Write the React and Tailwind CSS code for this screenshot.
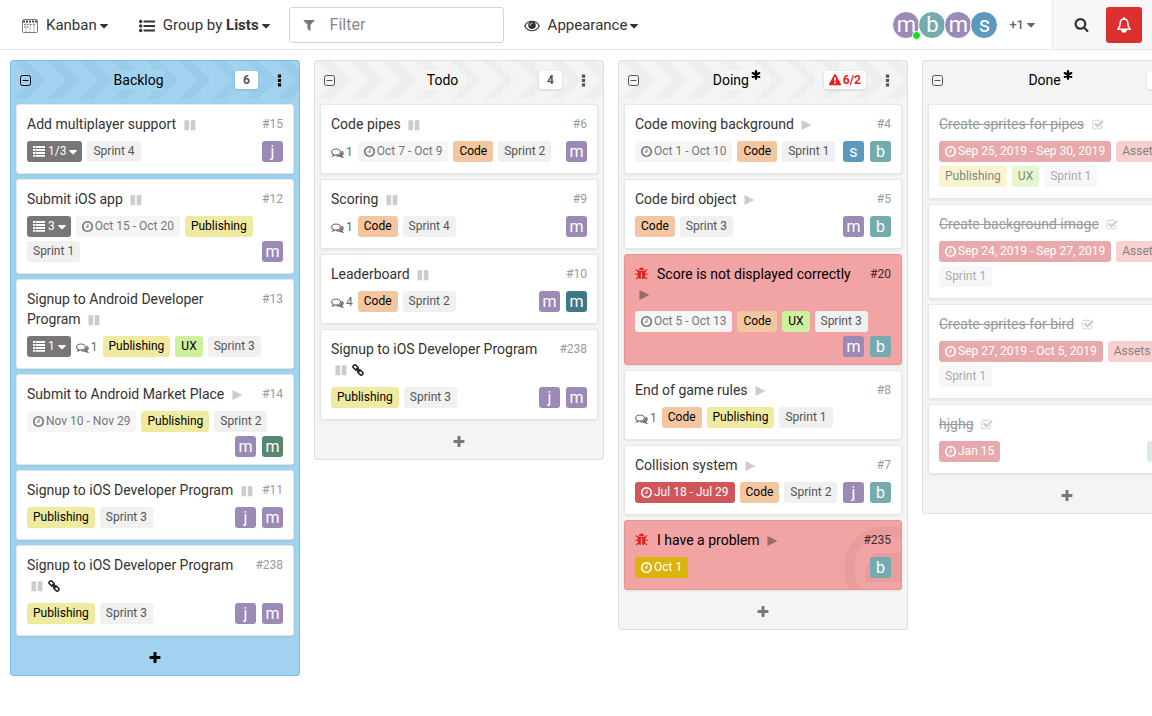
import React, { useState } from 'react';

const ICONS = {
    caret: 'M1408 704q0 26-19 45l-448 448q-19 19-45 19t-45-19l-448-448q-19-19-19-45t19-45 45-19h896q26 0 45 19t19 45z',
    plus: 'M1600 736v192q0 40-28 68t-68 28h-416v416q0 40-28 68t-68 28h-192q-40 0-68-28t-28-68v-416h-416q-40 0-68-28t-28-68v-192q0-40 28-68t68-28h416v-416q0-40 28-68t68-28h192q40 0 68 28t28 68v416h416q40 0 68 28t28 68z',
    clock: 'M1024 544v448q0 14-9 23t-23 9h-320q-14 0-23-9t-9-23v-64q0-14 9-23t23-9h224v-352q0-14 9-23t23-9h64q14 0 23 9t9 23zm416 352q0-148-73-273t-198-198-273-73-273 73-198 198-73 273 73 273 198 198 273 73 273-73 198-198 73-273zm224 0q0 209-103 385.5t-279.5 279.5-385.5 103-385.5-103-279.5-279.5-103-385.5 103-385.5 279.5-279.5 385.5-103 385.5 103 279.5 279.5 103 385.5z',
    search: 'M1216 832q0-185-131.5-316.5t-316.5-131.5-316.5 131.5-131.5 316.5 131.5 316.5 316.5 131.5 316.5-131.5 131.5-316.5zm512 832q0 52-38 90t-90 38q-54 0-90-38l-343-342q-179 124-399 124-143 0-273.5-55.5t-225-150-150-225-55.5-273.5 55.5-273.5 150-225 225-150 273.5-55.5 273.5 55.5 225 150 150 225 55.5 273.5q0 220-124 399l343 343q37 37 37 90z',
    filter: 'M1595 295q17 41-14 70l-493 493v742q0 42-39 59-13 5-25 5-27 0-45-19l-256-256q-19-19-19-45v-486l-493-493q-31-29-14-70 17-39 59-39h1280q42 0 59 39z',
    check: 'M1472 930v318q0 119-84.5 203.5t-203.5 84.5h-832q-119 0-203.5-84.5t-84.5-203.5v-832q0-119 84.5-203.5t203.5-84.5h832q63 0 117 25 15 7 18 23 3 17-9 29l-49 49q-10 10-23 10-3 0-9-2-23-6-45-6h-832q-66 0-113 47t-47 113v832q0 66 47 113t113 47h832q66 0 113-47t47-113v-254q0-13 9-22l64-64q10-10 23-10 6 0 12 3 20 8 20 29zm231-489l-814 814q-24 24-57 24t-57-24l-430-430q-24-24-24-57t24-57l110-110q24-24 57-24t57 24l263 263 647-647q24-24 57-24t57 24l110 110q24 24 24 57t-24 57z',
    warning: 'M1024 1375v-190q0-14-9.5-23.5t-22.5-9.5h-192q-13 0-22.5 9.5t-9.5 23.5v190q0 14 9.5 23.5t22.5 9.5h192q13 0 22.5-9.5t9.5-23.5zm-2-374l18-459q0-12-10-19-13-11-24-11h-220q-11 0-24 11-10 7-10 21l17 457q0 10 10 16.5t24 6.5h185q14 0 23.5-6.5t10.5-16.5zm-14-934l768 1408q35 63-2 126-17 29-46.5 46t-63.5 17h-1536q-34 0-63.5-17t-46.5-46q-37-63-2-126l768-1408q17-31 47-49t65-18 65 18 47 49z',
    list: 'M0 149h299v299H0zM373 149h1419v299H373zM0 597h299v299H0zM373 597h1419v299H373zM0 1045h299v299H0zM373 1045h1419v299H373zM0 1493h299v250H0zM373 1493h1419v250H373z',
    listUl: 'M0 384a192 192 0 1 0 384 0a192 192 0 1 0-384 0zM0 896a192 192 0 1 0 384 0a192 192 0 1 0-384 0zM0 1408a192 192 0 1 0 384 0a192 192 0 1 0-384 0zM512 272h1280v224H512zM512 784h1280v224H512zM512 1296h1280v224H512z',
    pause: 'M64 192h704v1500H64zM1000 192h704v1500H1000z',
    play: 'M64 150L1560 900L64 1650z',
    dots: 'M704 192h384v384H704zM704 704h384v384H704zM704 1216h384v384H704z',
};

const Icon = ({ name, className }) => (
    <svg viewBox="0 0 1792 1792" fill="currentColor" fillRule="evenodd" className={`shrink-0 ${className}`} aria-hidden="true">
        <path d={ICONS[name]} />
    </svg>
);

const BugIcon = () => (
    <svg viewBox="0 0 26 26" className="inline-block h-[13px] w-[13px] align-[-1px] text-[#e02222]" aria-hidden="true">
        <path d="M8 6.200a5 5 0 0 1 10 0z" fill="currentColor" />
        <path d="M5.500 7.500h15v9c0 4-2 7.500-6.300 7.500V10.500h-2.400V24c-4.300 0-6.300-3.500-6.300-7.500z" fill="currentColor" />
        <path d="M2.500 5.500l4.500 4M23.500 5.500l-4.500 4M1 14.500h7M25 14.500h-7M3 23.500l4.500-4.500M23 23.500L18.500 19" stroke="currentColor" strokeWidth="2.200" strokeLinecap="round" />
    </svg>
);

const LinkIcon = () => (
    <svg viewBox="0 0 24 24" className="ml-[2px] inline-block h-3 w-3 align-[-2px] text-[#222]" fill="none" stroke="currentColor" strokeWidth="3.200" aria-hidden="true">
        <rect x="1.500" y="3.500" width="11.500" height="7" rx="3.500" transform="rotate(45 7.250 7)" />
        <rect x="11" y="13.500" width="11.500" height="7" rx="3.500" transform="rotate(45 16.750 17)" />
        <path d="M9 9l6 6" strokeLinecap="round" />
    </svg>
);

const CommentsIcon = () => (
    <svg viewBox="0 0 26 24" className="h-3 w-[13px]" fill="none" stroke="currentColor" strokeWidth="2.200" aria-hidden="true">
        <path d="M10 4c-5 0-8.800 2.700-8.800 6 0 2.200 1.500 4 4 5-.3 1.300-1 2.200-1.800 3 2.300-.3 4-1.200 5.200-2.200l1.400.2c5 0 9-2.700 9-6s-4-6-9-6z" />
        <path d="M21.500 8c2 1 3 2.800 3 4.700 0 2-1.200 3.600-3.200 4.600.3 1.400.7 2.300 1.700 3.200-2.300-.3-4-1.200-5.300-2.200-3 .4-5.500-.2-7.400-1.300" />
        <path d="M21 9c0 4.500-3 7.500-8 8.500 2 .7 4 .7 6 .3l3-2.300 2-3.500z" fill="currentColor" stroke="none" />
    </svg>
);

const EyeIcon = () => (
    <svg viewBox="0 0 32 24" className="h-3 w-4" aria-hidden="true">
        <path d="M16 2.500C9 2.500 4 7 1.500 12 4 17 9 21.500 16 21.500S28 17 30.500 12C28 7 23 2.500 16 2.500z" fill="none" stroke="currentColor" strokeWidth="2.400" />
        <circle cx="16" cy="10.500" r="7.500" fill="currentColor" />
        <path d="M12 10.500a4 4 0 0 1 4-4" fill="none" stroke="#fff" strokeWidth="1.600" strokeLinecap="round" />
    </svg>
);

const BoardIcon = () => (
    <svg viewBox="0 0 16 14" className="h-[14px] w-4" aria-hidden="true">
        <rect x="0.500" y="0.500" width="15" height="13" rx="1" fill="#fff" stroke="#85777c" />
        <path d="M1 2.500h14" stroke="#444" strokeWidth="2" strokeDasharray="2 1" />
        <path d="M4 4v9M8 4v9M12 4v9" stroke="#bbb" />
        <path d="M2 5.500h12M2 8h6" stroke="#666" strokeDasharray="1.500 1.500" />
    </svg>
);

const BellIcon = () => (
    <svg viewBox="0 0 32 32" className="h-4 w-4" fill="none" stroke="currentColor" strokeWidth="3" strokeLinejoin="round" aria-hidden="true">
        <path d="M16 4c-5 0-7.500 3.500-7.500 8 0 6-2 9.500-5 12.500h25c-3-3-5-6.500-5-12.500 0-4.500-2.500-8-7.500-8z" />
        <path d="M16 1.500V4" strokeLinecap="round" />
        <path d="M12 26a4 4 0 0 0 8 0z" fill="currentColor" />
    </svg>
);

const Asterisk = () => (
    <svg viewBox="0 0 20 20" className="ml-[2px] h-[10px] w-[10px]" stroke="currentColor" strokeWidth="4.600" strokeLinecap="round" aria-hidden="true">
        <path d="M10 2.500v15M3.500 6.200l13 7.600M3.500 13.800l13-7.600" />
    </svg>
);

const TAGS = {
    Code: 'bg-[#f2c6a0] text-black',
    Publishing: 'bg-[#f0eaa0] text-black',
    UX: 'bg-[#cdf09d] text-black',
    Assets: 'bg-[#f4a3a3] text-black',
};

const PEOPLE = {
    j: { letter: 'j', color: 'bg-[#9b89b6]' },
    m: { letter: 'm', color: 'bg-[#9b89b6]' },
    b: { letter: 'b', color: 'bg-[#73abae]' },
    s: { letter: 's', color: 'bg-[#5b99bd]' },
    green: { letter: 'm', color: 'bg-[#56876f]' },
    teal: { letter: 'm', color: 'bg-[#417887]' },
};

const DATES = {
    normal: 'bg-[#f5f5f5] text-[#777]',
    late: 'bg-[#d15659] text-white',
    soon: 'bg-[#dcb30a] text-white',
};

const columns = [
    {
        name: 'Backlog', count: '6', active: true, arrows: true,
        cards: [
            { id: 15, title: 'Add multiplayer support', state: 'pause', subtasks: '1/3', tags: ['Sprint 4'], people: ['j'] },
            { id: 12, title: 'Submit iOS app', state: 'pause', subtasks: '3', date: 'Oct 15 - Oct 20', tags: ['Publishing', 'Sprint 1'], people: ['m'] },
            { id: 13, title: 'Signup to Android Developer Program', state: 'pause', subtasks: '1', comments: 1, tags: ['Publishing', 'UX', 'Sprint 3'] },
            { id: 14, title: 'Submit to Android Market Place', state: 'play', date: 'Nov 10 - Nov 29', tags: ['Publishing', 'Sprint 2'], people: ['m', 'green'] },
            { id: 11, title: 'Signup to iOS Developer Program', state: 'pause', tags: ['Publishing', 'Sprint 3'], people: ['j', 'm'] },
            { id: 238, title: 'Signup to iOS Developer Program', state: 'pause', link: true, tags: ['Publishing', 'Sprint 3'], people: ['j', 'm'] },
        ],
    },
    {
        name: 'Todo', count: '4', arrows: true,
        cards: [
            { id: 6, title: 'Code pipes', state: 'pause', comments: 1, date: 'Oct 7 - Oct 9', tags: ['Code', 'Sprint 2'], people: ['m'] },
            { id: 9, title: 'Scoring', state: 'pause', comments: 1, tags: ['Code', 'Sprint 4'], people: ['m'] },
            { id: 10, title: 'Leaderboard', state: 'pause', comments: 4, tags: ['Code', 'Sprint 2'], people: ['m', 'teal'] },
            { id: 238, title: 'Signup to iOS Developer Program', state: 'pause', link: true, tags: ['Publishing', 'Sprint 3'], people: ['j', 'm'] },
        ],
    },
    {
        name: 'Doing', count: '6/2', over: true, star: true, arrows: true,
        cards: [
            { id: 4, title: 'Code moving background', state: 'play', date: 'Oct 1 - Oct 10', tags: ['Code', 'Sprint 1'], people: ['s', 'b'] },
            { id: 5, title: 'Code bird object', state: 'play', tags: ['Code', 'Sprint 3'], people: ['m', 'b'] },
            { id: 20, title: 'Score is not displayed correctly', bug: true, state: 'play', date: 'Oct 5 - Oct 13', tags: ['Code', 'UX', 'Sprint 3'], people: ['m', 'b'] },
            { id: 8, title: 'End of game rules', state: 'play', comments: 1, tags: ['Code', 'Publishing', 'Sprint 1'] },
            { id: 7, title: 'Collision system', state: 'play', date: 'Jul 18 - Jul 29', dateType: 'late', tags: ['Code', 'Sprint 2'], people: ['j', 'b'] },
            { id: 235, title: 'I have a problem', bug: true, stamp: true, state: 'play', date: 'Oct 1', dateType: 'soon', tags: [], people: ['b'] },
        ],
    },
    {
        name: 'Done', count: '4', star: true, done: true,
        cards: [
            { id: 1, title: 'Create sprites for pipes', state: 'check', date: 'Sep 25, 2019 - Sep 30, 2019', dateType: 'late', tags: ['Assets', 'Publishing', 'UX', 'Sprint 1'] },
            { id: 2, title: 'Create background image', state: 'check', date: 'Sep 24, 2019 - Sep 27, 2019', dateType: 'late', tags: ['Assets', 'Sprint 1'] },
            { id: 3, title: 'Create sprites for bird', state: 'check', date: 'Sep 27, 2019 - Oct 5, 2019', dateType: 'late', tags: ['Assets', 'Sprint 1'] },
            { id: 16, title: 'hjghg', state: 'check', date: 'Jan 15', dateType: 'late', tags: [], people: ['b', 'm'] },
        ],
    },
];

const Card = ({ card, done }) => {
    const box = card.bug ? 'bg-[#f2a3a3] border-[#e69595]' : 'bg-white border-[#e6e6e6]';
    const titleColor = done ? 'text-[#999]' : card.bug ? 'text-black' : 'text-[#333]';
    const stateColor = card.bug ? 'text-[#9b6969]' : 'text-[#ccc]';

    return (
        <article className={`relative overflow-hidden rounded-[3px] border px-[10px] pt-[9px] pb-[7px] shadow-[0_1px_3px_rgba(0,0,0,0.08)] ${box}`}>
            {card.stamp && (
                <svg viewBox="0 0 58 64" className="absolute right-0 bottom-0 h-16 w-[58px] text-black/4" aria-hidden="true">
                    <circle cx="43" cy="43" r="37" fill="none" stroke="currentColor" strokeWidth="10" />
                    <path d="M22 57V43l10-15h26v29z" fill="currentColor" />
                </svg>
            )}
            <div className="relative flex items-start gap-[6px]">
                <h3 className={`flex-1 text-sm leading-5 ${card.link ? 'pb-px' : ''} ${titleColor}`}>
                    {card.bug && <span className="mr-[9px]"><BugIcon /></span>}
                    <span className={done ? 'line-through' : ''}>{card.title}</span>{' '}
                    <Icon name={card.state} className={`ml-1 inline-block h-3 w-3 align-[-2px] ${stateColor}`} />
                    {card.link && <> <LinkIcon /></>}
                </h3>
                {!done && <a href={`#${card.id}`} className={`text-xs leading-5 ${card.bug ? 'text-[#3d2929]' : 'text-[#999]'}`}>#{card.id}</a>}
            </div>
            <div className={`relative mt-[7px] flex flex-wrap items-start gap-x-[5px] text-xs leading-[21px] ${done ? 'opacity-50' : ''}`}>
                {card.subtasks && (
                    <button className="mb-1 flex h-[21px] items-center rounded-[3px] bg-[#777] pr-[2px] pl-[6px] text-white">
                        <Icon name="list" className="mr-[3px] mb-px h-3 w-3" />
                        {card.subtasks}
                        <Icon name="caret" className="h-[14px] w-[14px]" />
                    </button>
                )}
                {card.comments && (
                    <span className="mb-1 flex h-[21px] items-center gap-[2px] pt-[2px] text-[#666]"><CommentsIcon />{card.comments}</span>
                )}
                {card.date && (
                    <span className={`mb-1 flex items-center gap-px rounded-[3px] pr-[6px] pl-[5px] ${DATES[card.dateType || 'normal']}`}>
                        <Icon name="clock" className="h-[13px] w-[13px]" />{card.date}
                    </span>
                )}
                {card.tags.map(tag => (
                    <span key={tag} className={`mb-1 rounded-[3px] px-[6px] ${TAGS[tag] || 'bg-[#f0f0f0] text-[#555]'}`}>{tag}</span>
                ))}
                {card.people && (
                    <span className={`ml-auto flex gap-[6px] ${done ? 'opacity-50' : ''}`}>
                        {card.people.map(p => (
                            <span key={p} className={`h-[21px] w-[21px] rounded-[3px] text-center text-base leading-[21px] text-white ${PEOPLE[p].color}`}>{PEOPLE[p].letter}</span>
                        ))}
                    </span>
                )}
            </div>
        </article>
    );
};

const Column = ({ column }) => {
    const [collapsed, setCollapsed] = useState(false);
    const fill = column.active ? 'bg-[#a1d3f0]' : 'bg-[#f4f4f4]';
    const line = column.active ? 'border-[#76bfea]' : 'border-[#dfdfdf]';

    return (
        <section className={`w-[290px] shrink-0 rounded-[3px] border ${fill} ${line}`}>
            <header className="relative flex h-[38px] items-center pl-2">
                {column.arrows && (
                    <svg className={`absolute inset-0 h-full w-full ${column.active ? 'text-[#9acbea]' : 'text-[#eeeeee]'}`} fill="currentColor" aria-hidden="true">
                        {[3, 36, 69, 102, 135, 168, 201, 234, 267].map(x => (
                            <path key={x} d={`M${x} 0h13l19 19-19 19h-13l19-19z`} />
                        ))}
                    </svg>
                )}
                <button onClick={() => setCollapsed(!collapsed)} aria-label={`Collapse ${column.name}`} className={`relative mr-[10px] ${column.active ? 'text-black' : 'text-[#555]'}`}>
                    <svg viewBox="0 0 13 13" className="h-[13px] w-[13px]" fill="none" stroke="currentColor" aria-hidden="true">
                        <rect x="1.500" y="1.500" width="10" height="10" rx="2" />
                        <path d="M3.500 6.500h6" />
                    </svg>
                </button>
                <h2 className="relative flex flex-1 justify-center text-sm leading-5 text-black">
                    <span className={`flex ${fill}`}>{column.name}{column.star && <Asterisk />}</span>
                </h2>
                <span className={`relative flex h-[18px] items-center gap-[2px] rounded-[2px] bg-white text-xs font-bold shadow-[0_1px_3px_rgba(0,0,0,0.15)] ${column.over ? 'px-[5px] text-[#ee1c1c]' : 'px-[8px] text-[#555]'}`}>
                    {column.over && <Icon name="warning" className="h-3 w-3" />}
                    {column.count}
                </span>
                <button aria-label={`${column.name} menu`} className={`relative mr-3 ml-[14px] ${column.active ? 'text-black' : 'text-[#555]'}`}>
                    <Icon name="dots" className="h-[15px] w-[15px]" />
                </button>
            </header>
            {!collapsed && (
                <div className="flex flex-col gap-[5px] p-[5px]">
                    {column.cards.map(card => <Card key={card.id} card={card} done={column.done} />)}
                </div>
            )}
            <button aria-label={`Add card to ${column.name}`} className={`flex h-[34px] w-full items-center justify-center ${column.active ? 'text-black' : 'text-[#777]'}`}>
                <Icon name="plus" className="h-[14px] w-[14px]" />
            </button>
        </section>
    );
};

const Toolbar = () => {
    const [filter, setFilter] = useState('');

    return (
        <nav className="flex h-[50px] items-center border-b border-[#e5e5e5] bg-white text-[15px] text-[#333]">
            <div className="flex items-center pt-[2px]">
                <button className="ml-[22px] flex items-center">
                    <BoardIcon />
                    <span className="ml-2">Kanban</span>
                    <Icon name="caret" className="h-[14px] w-[14px]" />
                </button>
                <button className="ml-[28px] flex items-center">
                    <Icon name="listUl" className="h-4 w-4" />
                    <span className="ml-2">Group by <b className="font-bold">Lists</b></span>
                    <Icon name="caret" className="h-[14px] w-[14px]" />
                </button>
            </div>
            <label className="ml-[16px] flex h-9 w-[215px] items-center rounded-[3px] border border-[#d5d5d5] pl-3">
                <Icon name="filter" className="h-[14px] w-[14px] text-[#777]" />
                <input aria-label="Filter" placeholder="Filter" value={filter} onChange={e => setFilter(e.target.value)}
                    className="ml-[14px] w-full min-w-0 bg-transparent text-base outline-none placeholder:text-[#888]" />
            </label>
            <button className="ml-[20px] flex items-center pt-[2px]">
                <EyeIcon />
                <span className="ml-2">Appearance</span>
                <Icon name="caret" className="h-[14px] w-[14px]" />
            </button>
            <div className="ml-auto flex items-center">
                {['m', 'b', 'm', 's'].map((p, i) => (
                    <span key={i} className={`relative mr-[-2px] h-7 w-7 rounded-full border border-white text-center text-[22px] leading-[25px] text-white ${PEOPLE[p].color}`}>
                        {PEOPLE[p].letter}
                        {i === 0 && <span className="absolute right-[-2px] bottom-[-2px] z-10 h-[9px] w-[9px] rounded-full border border-white bg-[#10dc2c]" />}
                    </span>
                ))}
                <button className="mr-[14px] ml-[13px] flex items-center text-[13px] font-medium text-[#666]">
                    +1<Icon name="caret" className="h-[14px] w-[14px]" />
                </button>
            </div>
            <div className="flex h-full items-center border-l border-[#ececec] bg-[#f7f7f7] pr-[10px] pl-[21px]">
                <button aria-label="Search"><Icon name="search" className="h-[15px] w-[15px]" /></button>
                <button aria-label="Notifications" className="ml-[17px] flex h-9 w-9 items-center justify-center rounded-[3px] bg-[#de2f2f] text-white"><BellIcon /></button>
            </div>
        </nav>
    );
};

export default function App() {
    return (
        <div className="min-h-screen overflow-hidden bg-white font-[Roboto,sans-serif]">
            <Toolbar />
            <main className="flex items-start gap-[14px] p-[10px]">
                {columns.map(column => <Column key={column.name} column={column} />)}
            </main>
        </div>
    );
}
